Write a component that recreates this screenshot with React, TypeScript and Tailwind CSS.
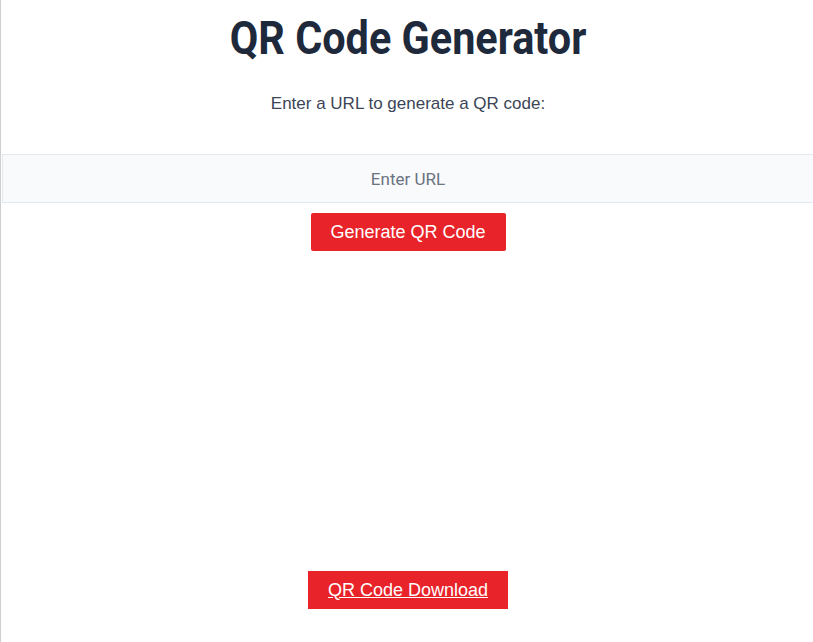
export default function App() {
  return (
    <div className="min-h-[642px] w-[815px] overflow-hidden border-l border-[#cfcfcf] bg-white font-['Liberation_Sans',Arial,sans-serif]">
      <div className="flex flex-col items-center">
        <h1 className="mt-[11px] scale-x-[0.9] whitespace-nowrap font-['Roboto',sans-serif] text-[46px] font-bold leading-[55px] text-[#1e293b]">
          QR Code Generator
        </h1>
        <p className="mt-[26px] text-[17px] leading-6 text-[#3b4556]">
          Enter a URL to generate a QR code:
        </p>
        <div className="mt-[38px] w-full pl-px">
          <input
            type="text"
            placeholder="Enter URL"
            className="block h-[49px] w-[812px] border border-[#e2e8f0] bg-[#f8fafc] text-center font-['Roboto',sans-serif] text-[17px] text-[#4b5563] outline-none placeholder:text-[#6b7280]"
          />
        </div>
        <button className="mt-[10px] h-[38px] w-[195px] rounded-[2px] bg-[#e8232a] text-[18px] text-white">
          Generate QR Code
        </button>
        <div className="h-[320px] w-full" />
        <a
          href="#"
          className="flex h-[38px] w-[200px] items-center justify-center bg-[#e8232a] text-[18px] text-white underline"
        >
          QR Code Download
        </a>
      </div>
    </div>
  );
}
